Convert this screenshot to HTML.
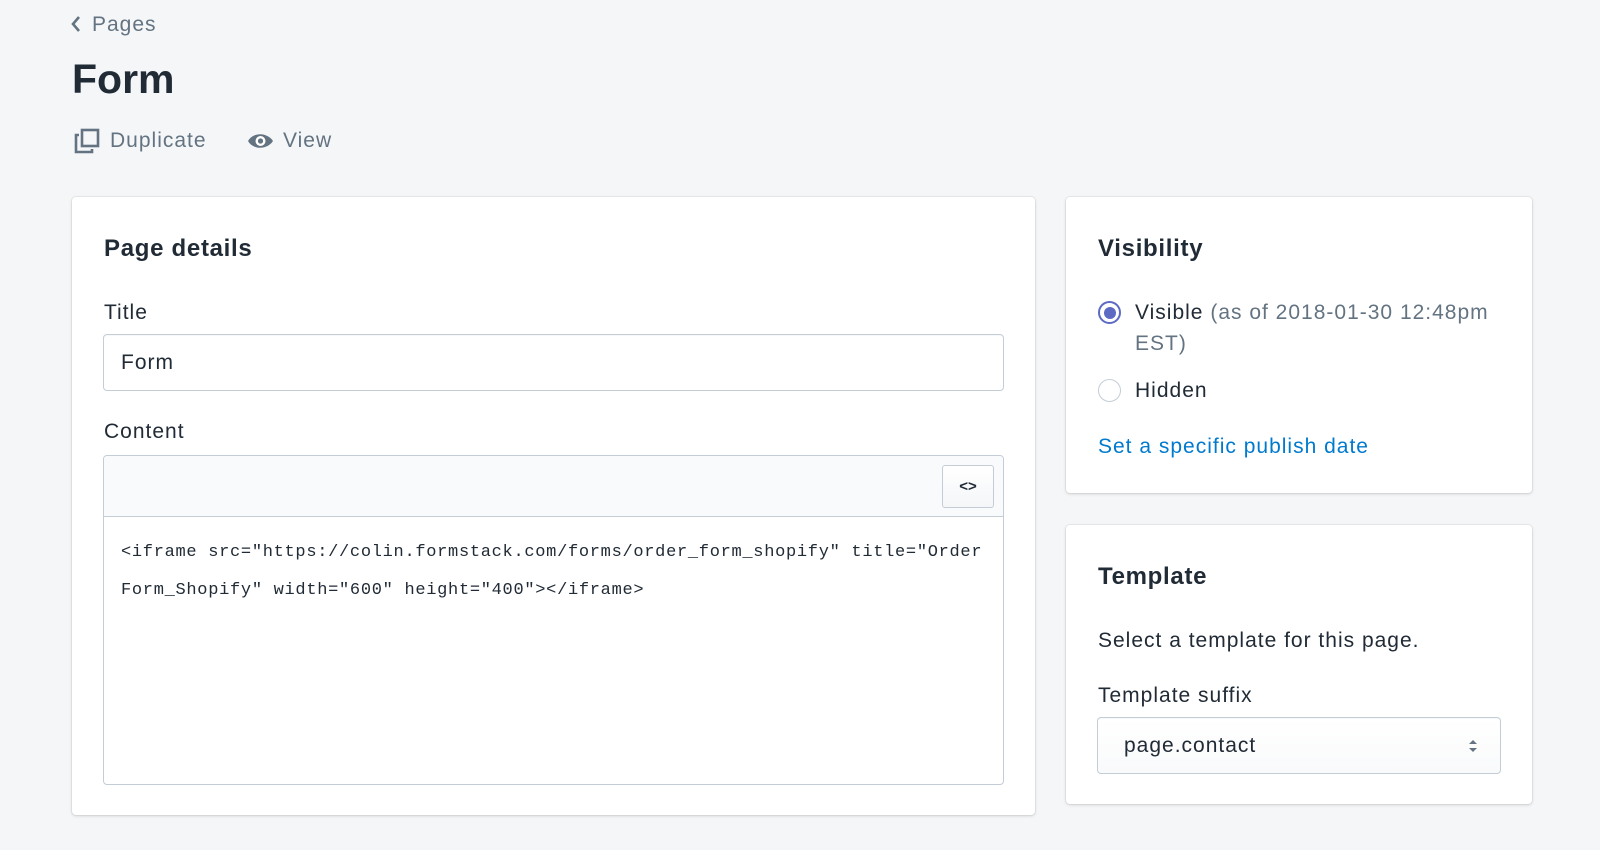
<!DOCTYPE html>
<html><head><style>
body{margin:0;background:#f4f6f8;font-family:"Liberation Sans",sans-serif;color:#212b36;width:1600px;height:850px;overflow:hidden;position:relative}
.a{position:absolute}
.card{position:absolute;background:#fff;border-radius:4px;box-shadow:0 0 0 1px rgba(63,63,68,.06),0 1px 3px rgba(63,63,68,.18)}
.h{font-size:24px;font-weight:bold;color:#212b36;letter-spacing:0.7px}
.t{font-size:21px;letter-spacing:1px}
.g{color:#637381}
.inp{position:absolute;border:1px solid #c4cdd5;border-radius:4px;background:#fff;box-shadow:inset 0 1px 0 rgba(99,115,129,.05)}
</style></head><body>
<svg class="a" style="left:68px;top:14px" width="16" height="20" viewBox="0 0 16 20"><path d="M11 3 L5 10 L11 17" stroke="#637381" stroke-width="2.6" fill="none"/></svg>
<div class="a t g" style="left:92px;top:13px">Pages</div>
<div class="a" style="left:72px;top:56px;font-size:41px;font-weight:bold;color:#212b36">Form</div>
<svg class="a" style="left:74px;top:128px" width="28" height="26" viewBox="0 0 28 26"><rect x="8" y="2" width="16" height="16" fill="none" stroke="#637381" stroke-width="2.6"/><path d="M5 7 H2 V24 H18 V21" fill="none" stroke="#637381" stroke-width="2.6"/></svg>
<div class="a t g" style="left:110px;top:129px">Duplicate</div>
<svg class="a" style="left:247px;top:130px" width="28" height="22" viewBox="0 0 28 22"><path d="M1 11 C6 2 20 2 26 11 C20 20 6 20 1 11Z" fill="#637381"/><circle cx="13.5" cy="11" r="5" fill="#fff"/><circle cx="13.5" cy="11" r="2.6" fill="#637381"/></svg>
<div class="a t g" style="left:283px;top:129px">View</div>

<div class="card" style="left:72px;top:197px;width:963px;height:618px"></div>
<div class="a h" style="left:104px;top:235px">Page details</div>
<div class="a t" style="left:104px;top:301px">Title</div>
<div class="inp" style="left:103px;top:334px;width:899px;height:55px"></div>
<div class="a t" style="left:121px;top:351px">Form</div>
<div class="a t" style="left:104px;top:420px">Content</div>
<div class="inp" style="left:103px;top:455px;width:899px;height:328px;overflow:hidden">
<div style="height:60px;background:#f9fafb;border-bottom:1px solid #c4cdd5"></div>
<div style="position:absolute;left:838px;top:9px;width:50px;height:41px;border:1px solid #c4cdd5;border-radius:3px;background:linear-gradient(#fff,#f4f6f8);font-size:15px;font-weight:bold;text-align:center;line-height:41px">&lt;&gt;</div>
<div style="position:absolute;left:17px;top:78px;font-family:'Liberation Mono',monospace;font-size:17px;letter-spacing:0.7px;line-height:38px;color:#212b36;width:870px">&lt;iframe src="https://colin.formstack.com/forms/order_form_shopify" title="Order Form_Shopify" width="600" height="400"&gt;&lt;/iframe&gt;</div>
</div>

<div class="card" style="left:1066px;top:197px;width:466px;height:296px"></div>
<div class="a h" style="left:1098px;top:235px">Visibility</div>
<div class="a" style="left:1098px;top:301px;width:23px;height:23px;border:2px solid #5c6ac4;border-radius:50%;box-sizing:border-box;background:#fff"><div style="margin:3.5px;width:12px;height:12px;border-radius:50%;background:#5c6ac4"></div></div>
<div class="a t" style="left:1135px;top:297px;line-height:31px;width:385px">Visible <span class="g">(as of 2018-01-30 12:48pm EST)</span></div>
<div class="a" style="left:1098px;top:379px;width:23px;height:23px;border:1px solid #c4cdd5;border-radius:50%;box-sizing:border-box;background:#fff"></div>
<div class="a t" style="left:1135px;top:379px">Hidden</div>
<div class="a t" style="left:1098px;top:435px;color:#007ace">Set a specific publish date</div>

<div class="card" style="left:1066px;top:525px;width:466px;height:279px"></div>
<div class="a h" style="left:1098px;top:563px">Template</div>
<div class="a t" style="left:1098px;top:629px">Select a template for this page.</div>
<div class="a t" style="left:1098px;top:684px">Template suffix</div>
<div class="inp" style="left:1097px;top:717px;width:402px;height:55px;background:linear-gradient(#fff,#f9fafb)"></div>
<div class="a t" style="left:1124px;top:734px">page.contact</div>
<svg class="a" style="left:1467px;top:737px" width="12" height="18" viewBox="0 0 12 18"><path d="M2 7 L6 3 L10 7Z M2 11 L6 15 L10 11Z" fill="#637381"/></svg>
</body></html>
